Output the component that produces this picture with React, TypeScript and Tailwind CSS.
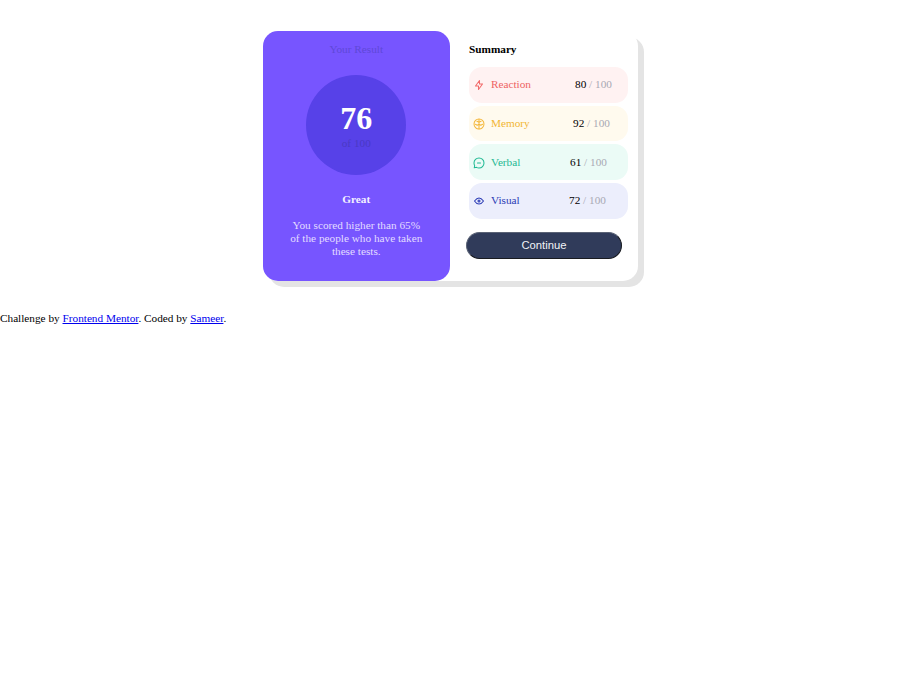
export default function App() {
  const iconProps = { width: 12, height: 12, viewBox: "0 0 20 20", fill: "none", strokeWidth: 1.7, strokeLinecap: "round" as const, strokeLinejoin: "round" as const };
  return (
    <div className="min-h-[675px] bg-white text-[11.25px] leading-[14px] text-black font-['Liberation_Serif',serif]">
      <main className="flex justify-center pt-[31px]">
        <div className="flex h-[250px] w-[375px] rounded-[15px] bg-white shadow-[6px_6px_0_0_#e4e4e4]">
          <section className="flex w-[187.5px] flex-col items-center rounded-[15px] bg-[#7755ff] pt-[11px]">
            <h2 className="text-[#5f48d8]">Your Result</h2>
            <div className="mt-[19px] flex h-[100px] w-[100px] flex-col items-center justify-center rounded-full bg-[#5741e8]">
              <span className="text-[32px] font-bold leading-[35px] text-white">76</span>
              <span className="text-[#4a39c4]">of 100</span>
            </div>
            <h3 className="mt-[17px] font-bold text-[#f3f0ff]">Great</h3>
            <p className="mt-[13px] w-[136px] text-center leading-[13px] text-[#e2dcff]">
              You scored higher than 65% of the people who have taken these tests.
            </p>
          </section>
          <section className="flex flex-1 flex-col pl-[16px] pt-[11px]">
            <h2 className="ml-[3px] font-bold">Summary</h2>
            <div className="ml-[3px] mt-[11px] flex w-[159px] flex-col gap-[3.2px]">
              <div className="flex h-[35.5px] items-center rounded-[13px] bg-[#fff2f2] pb-[1px] pl-[3px]">
                <svg {...iconProps} stroke="#f26a6a" className="ml-[0.5px] mr-[6.5px] mt-[2px]"><path d="M10.833 8.333V2.5l-6.666 9.167h5V17.5l6.666-9.167h-5Z" /></svg>
                <span className="w-[84px] text-[#ee6464]">Reaction</span>
                <span>80</span><span className="text-[#a9a9b4]">&nbsp;/ 100</span>
              </div>
              <div className="flex h-[35.5px] items-center rounded-[13px] bg-[#fffaee] pb-[1px] pl-[3px]">
                <svg {...iconProps} stroke="#f4b73a" className="ml-[0.5px] mr-[6.5px] mt-[2px]"><circle cx="10" cy="10" r="8.3" /><path d="M10 2v16M10 7 6.5 5.5M10 7l3.5-1.5M4 10.5l3 1.5 3-1.5M10 10.5l3 1.5 3-1.5" /></svg>
                <span className="w-[82px] text-[#f2b632]">Memory</span>
                <span>92</span><span className="text-[#a9a9b4]">&nbsp;/ 100</span>
              </div>
              <div className="flex h-[35.5px] items-center rounded-[13px] bg-[#ebfbf6] pb-[1px] pl-[3px]">
                <svg {...iconProps} stroke="#1fb993" className="ml-[0.5px] mr-[6.5px] mt-[2px]"><path d="M7.5 10h5M10 18.333A8.333 8.333 0 1 0 1.667 10c0 1.518.406 2.942 1.115 4.167l-.699 3.75 3.75-.699A8.295 8.295 0 0 0 10 18.333Z" /></svg>
                <span className="w-[79px] text-[#1fb993]">Verbal</span>
                <span>61</span><span className="text-[#a9a9b4]">&nbsp;/ 100</span>
              </div>
              <div className="flex h-[35.5px] items-center rounded-[13px] bg-[#eceefc] pb-[1px] pl-[3px]">
                <svg {...iconProps} stroke="#2b3bb5" className="ml-[0.5px] mr-[6.5px] mt-[2px]"><path d="M10 11.667a1.667 1.667 0 1 0 0-3.334 1.667 1.667 0 0 0 0 3.334Z" /><path d="M17.5 10c-1.574 2.492-4.402 5-7.5 5s-5.926-2.508-7.5-5C4.416 7.632 6.66 5 10 5s5.584 2.632 7.5 5Z" /></svg>
                <span className="w-[78px] text-[#2b3bb5]">Visual</span>
                <span>72</span><span className="text-[#a9a9b4]">&nbsp;/ 100</span>
              </div>
            </div>
            <button className="mt-[13.4px] h-[27.5px] w-[156px] rounded-full border-[1.5px] border-[#5a6275] bg-[#303b5a] pb-[1px] text-center font-['Liberation_Sans',sans-serif] text-[11.25px] text-[#f2f3f6] [border-style:outset]">
              Continue
            </button>
          </section>
        </div>
      </main>
      <footer className="mt-[30px]">
        Challenge by <a href="#" className="text-[#0000ee] underline">Frontend Mentor</a>. Coded by <a href="#" className="text-[#0000ee] underline">Sameer</a>.
      </footer>
    </div>
  );
}
